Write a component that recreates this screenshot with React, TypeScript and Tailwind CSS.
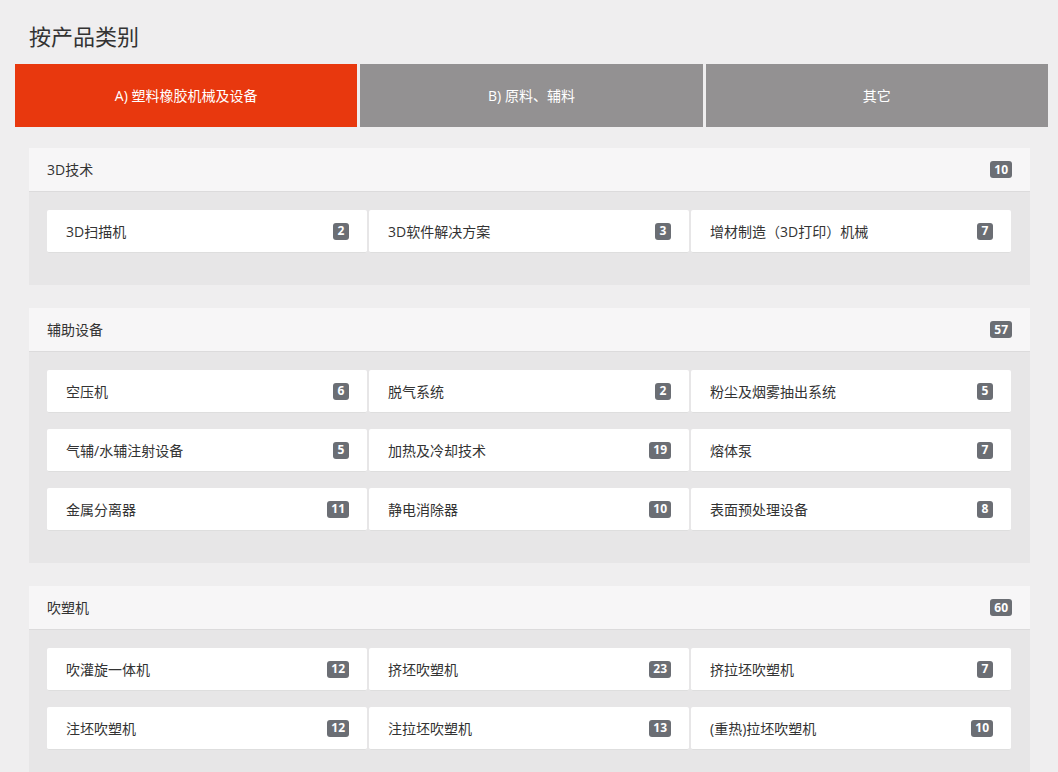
import React from "react";

type Item = { name: string; count: number };
type Section = { title: string; count: number; items: Item[] };

const tabs = ["A) 塑料橡胶机械及设备", "B) 原料、辅料", "其它"];

const sections: Section[] = [
  {
    title: "3D技术",
    count: 10,
    items: [
      { name: "3D扫描机", count: 2 },
      { name: "3D软件解决方案", count: 3 },
      { name: "增材制造（3D打印）机械", count: 7 },
    ],
  },
  {
    title: "辅助设备",
    count: 57,
    items: [
      { name: "空压机", count: 6 },
      { name: "脱气系统", count: 2 },
      { name: "粉尘及烟雾抽出系统", count: 5 },
      { name: "气辅/水辅注射设备", count: 5 },
      { name: "加热及冷却技术", count: 19 },
      { name: "熔体泵", count: 7 },
      { name: "金属分离器", count: 11 },
      { name: "静电消除器", count: 10 },
      { name: "表面预处理设备", count: 8 },
    ],
  },
  {
    title: "吹塑机",
    count: 60,
    items: [
      { name: "吹灌旋一体机", count: 12 },
      { name: "挤坯吹塑机", count: 23 },
      { name: "挤拉坯吹塑机", count: 7 },
      { name: "注坯吹塑机", count: 12 },
      { name: "注拉坯吹塑机", count: 13 },
      { name: "(重热)拉坯吹塑机", count: 10 },
    ],
  },
];

const Badge = ({ n }: { n: number }) => (
  <span className="inline-flex h-[17px] min-w-[16px] items-center justify-center rounded-[3px] bg-[#6b6e74] px-[4px] text-[12px] font-bold leading-none text-white">
    {n}
  </span>
);

const App = () => {
  return (
    <div
      className="min-h-[772px] w-full overflow-hidden bg-[#efeeef] text-[#333]"
      style={{ fontFamily: '"Open Sans", "Noto Sans CJK SC", sans-serif' }}
    >
      <h1 className="px-[29px] pt-[19px] pb-[11px] text-[22px] font-normal leading-[34px] text-[#333]">
        按产品类别
      </h1>
      <div className="ml-[15px] mr-[10px] flex gap-[3px]">
        {tabs.map((t, i) => (
          <div
            key={t}
            className={
              "flex h-[63px] flex-1 items-center justify-center text-[14px] text-white " +
              (i === 0 ? "bg-[#e8380e]" : "bg-[#939192]")
            }
          >
            {t}
          </div>
        ))}
      </div>
      <div className="mx-[28px] ml-[29px] mt-[21px] flex flex-col gap-[23px]">
        {sections.map((s) => (
          <div key={s.title}>
            <div className="flex h-[44px] items-center justify-between border-b border-[#dcdbdc] bg-[#f7f6f7] pl-[18px] pr-[18px] text-[14px]">
              <span>{s.title}</span>
              <Badge n={s.count} />
            </div>
            <div className="grid grid-cols-3 gap-x-[2px] gap-y-[16px] bg-[#e7e6e7] pl-[18px] pr-[19px] pt-[18px] pb-[32px]">
              {s.items.map((it) => (
                <div
                  key={it.name}
                  className="flex h-[43px] items-center justify-between rounded-[2px] border-b border-[#dedede] bg-white pl-[19px] pr-[18px] text-[14px]"
                >
                  <span>{it.name}</span>
                  <Badge n={it.count} />
                </div>
              ))}
            </div>
          </div>
        ))}
      </div>
    </div>
  );
};

export default App;
